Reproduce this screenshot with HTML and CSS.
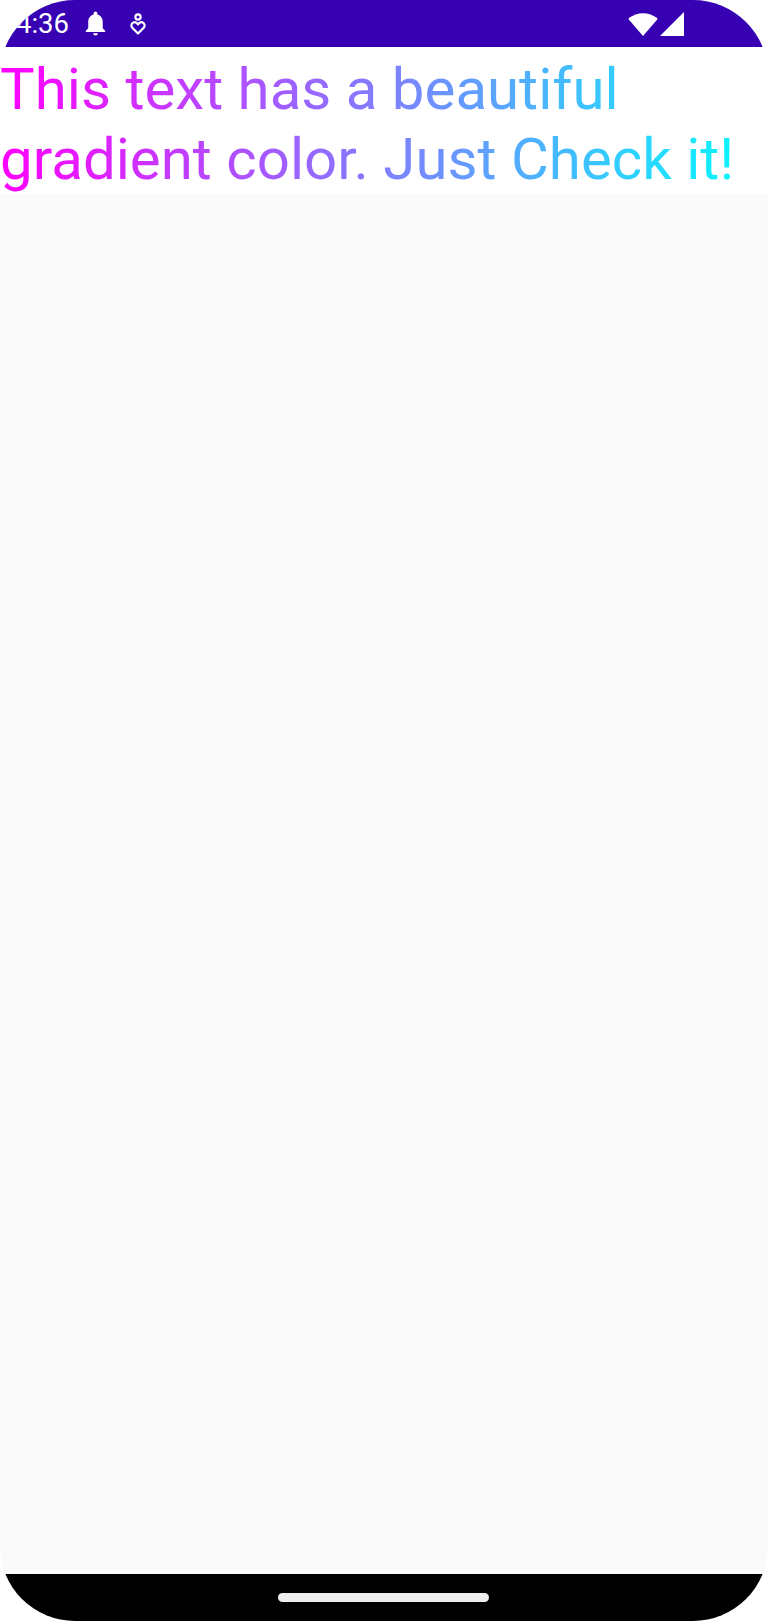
FILE: index.html
```html
<!DOCTYPE html>
<html lang="en">
<head>
    <meta charset="UTF-8">
    <title>Gradient Text</title>
    <link rel="stylesheet" href="styles.css">
</head>
<body>
    <div class="phone">
        <div class="status-bar">
            <span class="clock">4:36</span>
            <svg class="bell" viewBox="0 0 24 24"><path d="M12 2a1.6 1.6 0 0 0-1.6 1.6v.9C7.6 5.200 6 7.700 6 10.600V16l-2 2v1h16v-1l-2-2v-5.400c0-2.900-1.600-5.400-4.400-6.100v-.9A1.600 1.600 0 0 0 12 2zm-2 18a2 2 0 0 0 4 0z" fill="#fff"/></svg>
            <svg class="heart" viewBox="0 0 18 24"><circle cx="9" cy="5" r="2.600" fill="none" stroke="#fff" stroke-width="2.200"/><path d="M9 21.500 3.300 15.800a3.200 3.200 0 0 1 0-4.500 3.300 3.300 0 0 1 4.600 0L9 12.400l1.100-1.100a3.300 3.300 0 0 1 4.600 0 3.200 3.200 0 0 1 0 4.500z" fill="none" stroke="#fff" stroke-width="2.200" stroke-linejoin="round"/></svg>
            <span class="spacer"></span>
            <svg class="wifi" viewBox="0 0 30 24"><path d="M15 24 1 7.800C.4 7 .5 6.300 1.200 5.800 5.200 3 9.800 1.200 15 1.200S24.800 3 28.800 5.800c.7.500.8 1.200.2 2z" fill="#fff"/></svg>
            <svg class="signal" viewBox="0 0 24 24"><path d="M24 0v24H0z" fill="#fff"/></svg>
        </div>
        <div class="text-box">
            <p class="gradient-text">This text has a beautiful gradient color. Just Check it!</p>
        </div>
        <div class="content"></div>
        <div class="nav-bar">
            <div class="home-handle"></div>
        </div>
    </div>
</body>
</html>
```

FILE: styles.css
```css
html, body {
    margin: 0;
    padding: 0;
    background-color: #fff;
}
.phone {
    width: 768px;
    height: 1621px;
    display: flex;
    flex-direction: column;
    border-radius: 75px;
    overflow: hidden;
    font-family: Roboto, sans-serif;
}
.status-bar {
    height: 47px;
    padding: 0 84px 0 16px;
    box-sizing: border-box;
    background-color: #3700b3;
    display: flex;
    align-items: center;
    color: #fff;
}
.clock {
    font-size: 27.5px;
    width: 64.5px;
}
.bell {
    width: 29px;
    height: 29px;
}
.heart {
    width: 18px;
    height: 24px;
    margin-left: 19.5px;
}
.spacer {
    flex: 1;
}
.wifi {
    width: 30px;
    height: 24px;
}
.signal {
    width: 24px;
    height: 24px;
    margin-left: 2.5px;
}
.text-box {
    height: 147px;
    background-color: #fff;
}
.gradient-text {
    margin: 0;
    padding-top: 7px;
    font-size: 58.2px;
    line-height: 70px;
    background: linear-gradient(to right, #f0f, #0ff);
    -webkit-background-clip: text;
    background-clip: text;
    color: transparent;
}
.content {
    flex: 1;
    background-color: #fafafa;
}
.nav-bar {
    height: 47px;
    background-color: #000;
    display: flex;
    justify-content: center;
    padding: 19px 1px 0 0;
    box-sizing: border-box;
}
.home-handle {
    width: 211px;
    height: 9px;
    border-radius: 4.5px;
    background-color: #eee;
}
```
